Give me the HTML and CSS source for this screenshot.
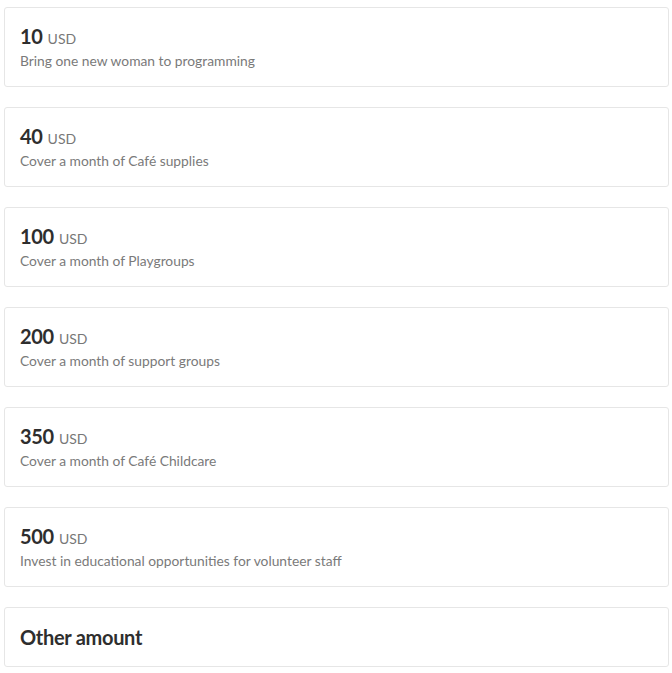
FILE: index.html
```html
<!DOCTYPE html>
<html>
<head>
<meta charset="utf-8">
<link rel="stylesheet" href="styles.css">
</head>
<body>
<div class="list">
  <div class="card"><div class="amount"><span class="num">10</span><span class="cur">USD</span></div><div class="desc">Bring one new woman to programming</div></div>
  <div class="card"><div class="amount"><span class="num">40</span><span class="cur">USD</span></div><div class="desc">Cover a month of Café supplies</div></div>
  <div class="card"><div class="amount"><span class="num">100</span><span class="cur">USD</span></div><div class="desc">Cover a month of Playgroups</div></div>
  <div class="card"><div class="amount"><span class="num">200</span><span class="cur">USD</span></div><div class="desc">Cover a month of support groups</div></div>
  <div class="card"><div class="amount"><span class="num">350</span><span class="cur">USD</span></div><div class="desc">Cover a month of Café Childcare</div></div>
  <div class="card"><div class="amount"><span class="num">500</span><span class="cur">USD</span></div><div class="desc">Invest in educational opportunities for volunteer staff</div></div>
  <div class="card other"><div class="num">Other amount</div></div>
</div>
</body>
</html>
```
FILE: styles.css
```css
html, body { margin: 0; padding: 0; background: #fff; }
body { font-family: "Lato", "Liberation Sans", sans-serif; color: #333; }
.list { display: flex; flex-direction: column; gap: 20px; padding: 7px 3px 0 4px; }
.card {
  border: 1px solid #e6e6e6;
  border-radius: 3px;
  height: 80px;
  box-sizing: border-box;
  padding: 1px 15px 0;
  display: flex;
  flex-direction: column;
  justify-content: center;
}
.card.other { height: 60px; padding-top: 0; }
.amount { display: flex; align-items: baseline; gap: 5px; line-height: 24px; }
.num { font-size: 20px; font-weight: 700; color: #2e2e2e; letter-spacing: -0.3px; }
.cur { font-size: 14px; color: #777; }
.desc { font-size: 13.8px; color: #7a7a7a; line-height: 20px; }
```
